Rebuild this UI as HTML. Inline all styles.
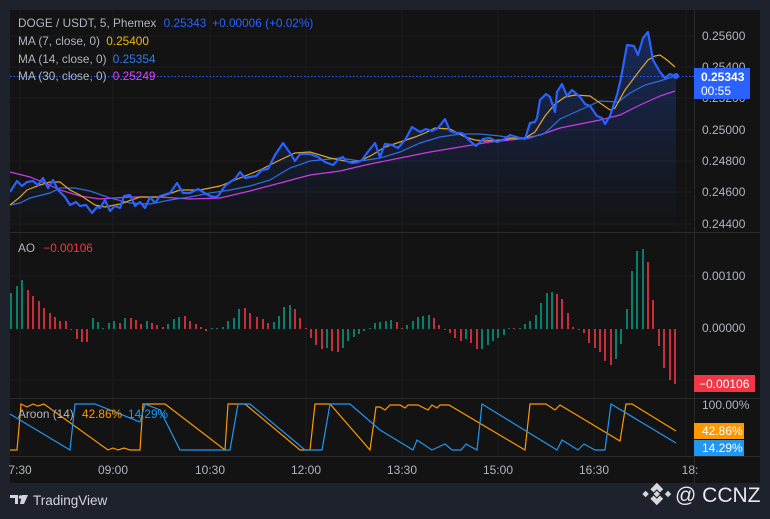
<!DOCTYPE html>
<html><head><meta charset="utf-8"><style>
html,body{margin:0;padding:0;background:#1e222d;width:770px;height:519px;overflow:hidden;font-family:"Liberation Sans",sans-serif}
svg{position:absolute;left:0;top:0}
</style></head><body>
<svg width="770" height="519" viewBox="0 0 770 519" xmlns="http://www.w3.org/2000/svg" font-family="Liberation Sans, sans-serif">
<defs>
<linearGradient id="fg" x1="0" y1="30" x2="0" y2="232" gradientUnits="userSpaceOnUse"><stop offset="0" stop-color="#2962ff" stop-opacity="0.3"/><stop offset="0.85" stop-color="#2962ff" stop-opacity="0.04"/><stop offset="1" stop-color="#2962ff" stop-opacity="0"/></linearGradient>
<clipPath id="cp"><rect x="10" y="10" width="684" height="222"/></clipPath>
</defs>
<rect x="10" y="10" width="750" height="473" fill="#131313"/>
<g stroke="#1d1d1d" stroke-width="1">
<line x1="20" y1="10" x2="20" y2="456"/><line x1="113" y1="10" x2="113" y2="456"/><line x1="210" y1="10" x2="210" y2="456"/><line x1="306" y1="10" x2="306" y2="456"/><line x1="402" y1="10" x2="402" y2="456"/><line x1="498" y1="10" x2="498" y2="456"/><line x1="594" y1="10" x2="594" y2="456"/><line x1="686" y1="10" x2="686" y2="456"/>
<line x1="10" y1="36" x2="694" y2="36"/><line x1="10" y1="67" x2="694" y2="67"/><line x1="10" y1="98" x2="694" y2="98"/><line x1="10" y1="130" x2="694" y2="130"/><line x1="10" y1="161" x2="694" y2="161"/><line x1="10" y1="192" x2="694" y2="192"/><line x1="10" y1="224" x2="694" y2="224"/>
<line x1="10" y1="276" x2="694" y2="276"/><line x1="10" y1="380" x2="694" y2="380"/>
</g>
<g stroke="#2a2a2a" stroke-width="1">
<line x1="10" y1="232.5" x2="760" y2="232.5"/><line x1="10" y1="398.5" x2="760" y2="398.5"/><line x1="10" y1="456.5" x2="760" y2="456.5"/><line x1="694.5" y1="10" x2="694.5" y2="483"/>
</g>
<g clip-path="url(#cp)">
<path fill="url(#fg)" d="M10,192 L17,181 22,186 27,182 33,181 38,185 43,178 48,188 53,180 58,190 65,197 70,205 76,202 80,206 86,205 92,213 97,207 100,208 105,200 110,211 115,206 120,208 124,196 130,195 135,206 140,202 145,208 150,197 155,203 160,196 170,193 177,183 183,193 190,193 198,189 203,192 210,196 215,197 218,196 225,186 230,182 235,179 240,172 245,178 250,177 256,176 262,170 268,169 275,155 283,143 290,153 295,161 300,154 310,154 318,157 325,162 333,165 340,158 343,157 346,161 352,163 358,162 362,160 367,153 375,143 380,157 385,144 392,145 398,148 405,140 412,127 420,132 426,129 432,131 438,128 445,119 450,131 457,133 462,133 470,141 476,146 483,139 490,138 497,142 503,140 510,135 520,138 525,139 530,123 535,122 537,118 540,100 546,94 550,97 552,103 555,112 557,92 562,84 567,96 572,90 580,97 585,104 590,106 597,116 602,118 605,124 610,116 617,95 621,78 627,45 634,46 638,55 643,38 648,32 653,60 660,72 665,78 670,74 676,77 L676,232 L10,232Z"/>
<polyline fill="none" stroke="#e040fb" stroke-width="1.2" stroke-opacity="0.9" points="10,172 30,177 45,183 60,190 80,196 100,199 130,197 160,197 190,199 220,198 250,191 280,183 310,175 340,171 370,164 400,158 430,152 460,147 490,142 520,139 540,135 560,128 600,120 620,115 640,105 660,96 675,91"/>
<polyline fill="none" stroke="#2f6fe0" stroke-width="1.2" points="10,205 20,203 30,198 50,193 60,188 75,188 90,191 110,198 130,203 150,204 170,200 190,197 210,193 230,190 250,186 270,180 290,168 310,161 340,158 360,161 380,158 400,152 420,143 440,137 460,134 480,134 500,136 520,139 530,138 545,133 560,119 580,110 600,101 618,102 630,93 645,85 660,81 675,76"/>
<polyline fill="none" stroke="#e0a526" stroke-width="1.2" points="10,205 20,197 27,190 40,185 50,182 60,182 70,190 80,195 95,205 105,207 120,204 140,197 160,197 180,190 200,190 220,186 240,178 260,170 280,160 295,153 310,152 330,158 350,162 360,161 372,155 385,147 400,142 415,137 425,133 435,128 450,129 465,137 475,140 485,141 500,140 515,138 525,138 535,132 545,116 555,104 565,97 575,95 590,96 600,103 610,110 615,108 625,90 640,70 648,60 655,56 660,55 667,60 675,67"/>
<polyline fill="none" stroke="#2962ff" stroke-width="2.2" stroke-linejoin="round" points="10,192 17,181 22,186 27,182 33,181 38,185 43,178 48,188 53,180 58,190 65,197 70,205 76,202 80,206 86,205 92,213 97,207 100,208 105,200 110,211 115,206 120,208 124,196 130,195 135,206 140,202 145,208 150,197 155,203 160,196 170,193 177,183 183,193 190,193 198,189 203,192 210,196 215,197 218,196 225,186 230,182 235,179 240,172 245,178 250,177 256,176 262,170 268,169 275,155 283,143 290,153 295,161 300,154 310,154 318,157 325,162 333,165 340,158 343,157 346,161 352,163 358,162 362,160 367,153 375,143 380,157 385,144 392,145 398,148 405,140 412,127 420,132 426,129 432,131 438,128 445,119 450,131 457,133 462,133 470,141 476,146 483,139 490,138 497,142 503,140 510,135 520,138 525,139 530,123 535,122 537,118 540,100 546,94 550,97 552,103 555,112 557,92 562,84 567,96 572,90 580,97 585,104 590,106 597,116 602,118 605,124 610,116 617,95 621,78 627,45 634,46 638,55 643,38 648,32 653,60 660,72 665,78 670,74 676,77"/>
</g>
<line x1="10" y1="76.5" x2="694" y2="76.5" stroke="#2962ff" stroke-width="1" stroke-dasharray="1.5,2"/>
<circle cx="676" cy="76" r="3" fill="#2962ff"/>
<path stroke="#089981" stroke-width="1.6" fill="none" d="M11,329V293M17,329V286M22,329V280M93,329V318M98,329V322M103,329V328M109,329V323M114,329V321M125,329V318M147,329V321M168,329V324M174,329V319M179,329V317M212,329V328M217,329V328M223,329V327M228,329V321M234,329V318M239,329V309M274,329V322M279,329V316M284,329V307M290,329V305M327,329V348M343,329V348M348,329V341M354,329V337M359,329V334M364,329V331M370,329V328M375,329V323M380,329V322M386,329V321M391,329V320M407,329V325M413,329V321M418,329V317M423,329V316M429,329V315M466,329V339M482,329V349M488,329V345M493,329V341M498,329V338M504,329V335M509,329V328M520,329V328M525,329V324M530,329V321M536,329V315M541,329V303M547,329V293M552,329V292M616,329V359M621,329V344M627,329V309M632,329V271M637,329V251M643,329V249"/>
<path stroke="#f23645" stroke-width="1.6" fill="none" d="M28,329V290M33,329V296M39,329V301M44,329V308M50,329V313M55,329V317M60,329V321M66,329V321M71,329V330M77,329V339M82,329V342M87,329V342M120,329V323M131,329V318M136,329V320M141,329V324M152,329V323M157,329V325M163,329V327M185,329V316M190,329V321M196,329V324M201,329V327M206,329V331M245,329V308M250,329V313M257,329V317M263,329V319M268,329V323M295,329V309M300,329V318M306,329V328M311,329V338M316,329V345M322,329V349M332,329V351M338,329V352M397,329V322M402,329V328M434,329V318M439,329V325M445,329V330M450,329V333M455,329V338M461,329V341M471,329V343M477,329V349M514,329V328M557,329V294M562,329V299M568,329V313M573,329V327M579,329V330M584,329V333M589,329V343M595,329V348M600,329V352M605,329V361M611,329V365M648,329V262M653,329V300M659,329V346M664,329V368M670,329V380M675,329V384"/>
<polyline fill="none" stroke="#ff9800" stroke-width="1.2" points="10,450 17,450 21,404 27,407 33,404 38,406 44,404 108,450 113,448 118,450 124,448 130,450 140,450 143,404 165,404 225,450 228,404 245,404 300,450 310,450 315,404 330,404 370,450 376,407 380,407 385,410 390,405 400,405 405,408 408,405 418,405 428,410 432,405 437,408 440,405 449,405 525,450 530,404 546,404 555,410 560,405 620,441 626,404 632,404 676,431"/>
<polyline fill="none" stroke="#2196f3" stroke-width="1.2" points="10,414 70,450 75,404 90,404 95,404 140,422 145,404 160,410 180,450 230,450 238,404 250,404 305,450 322,450 330,404 350,404 380,430 413,450 417,440 432,450 445,444 452,450 461,450 466,444 477,450 482,404 557,450 562,440 578,450 584,444 595,450 605,450 611,404 676,443"/>
<g font-size="11.8">
<text x="18" y="27" fill="#b2b5be">DOGE / USDT, 5, Phemex <tspan fill="#2962ff" dx="4">0.25343</tspan><tspan fill="#2962ff" dx="6">+0.00006 (+0.02%)</tspan></text>
<text x="18" y="45" fill="#b2b5be">MA (7, close, 0) <tspan fill="#f0b90b" dx="3">0.25400</tspan></text>
<text x="18" y="63" fill="#b2b5be">MA (14, close, 0) <tspan fill="#2f7bf0" dx="3">0.25354</tspan></text>
<text x="18" y="80" fill="#b2b5be">MA (30, close, 0) <tspan fill="#e040fb" dx="3">0.25249</tspan></text>
<text x="18" y="252" fill="#b2b5be">AO <tspan fill="#f23645" dx="5">−0.00106</tspan></text>
<text x="18" y="418" fill="#b2b5be">Aroon (14) <tspan fill="#ff9800" dx="5">42.86%</tspan><tspan fill="#2196f3" dx="6">14.29%</tspan></text>
</g>
<g font-size="12" fill="#b2b5be">
<text x="702" y="40">0.25600</text><text x="702" y="71">0.25400</text><text x="702" y="102">0.25200</text><text x="702" y="134">0.25000</text><text x="702" y="165">0.24800</text><text x="702" y="196">0.24600</text><text x="702" y="228">0.24400</text>
<text x="702" y="332">0.00000</text><text x="702" y="280">0.00100</text>
<text x="702" y="409">100.00%</text>
</g>
<rect x="694" y="68" width="56" height="31" fill="#2962ff"/>
<text x="701" y="81" font-size="12" font-weight="bold" fill="#fff">0.25343</text>
<text x="701" y="95" font-size="12" fill="#fff">00:55</text>
<rect x="694" y="375" width="61" height="17" fill="#f23645"/>
<text x="699" y="388" font-size="12" fill="#fff">−0.00106</text>
<rect x="694" y="423" width="50" height="16" fill="#ff9800"/>
<text x="702" y="435" font-size="12" fill="#fff">42.86%</text>
<rect x="694" y="440" width="50" height="16" fill="#2196f3"/>
<text x="702" y="452" font-size="12" fill="#fff">14.29%</text>
<g font-size="12" fill="#b2b5be" text-anchor="middle">
<text x="20" y="474">7:30</text><text x="113" y="474">09:00</text><text x="210" y="474">10:30</text><text x="306" y="474">12:00</text><text x="402" y="474">13:30</text><text x="498" y="474">15:00</text><text x="594" y="474">16:30</text><text x="690" y="474">18:</text>
</g>
<g fill="#d1d4dc">
<path d="M10,495h8v9h-3v-6h-5z"/><circle cx="20.5" cy="497" r="1.8"/><path d="M22,495h6l-4,9h-4z"/>
</g>
<text x="33" y="505" font-size="13.5" fill="#d1d4dc">TradingView</text>
<g fill="#d8d8d8" transform="translate(644,494) scale(1.6)">
<path d="M8,-7 L12,-3 10,-1 8,-3 6,-1 4,-3Z"/><path d="M8,7 L12,3 10,1 8,3 6,1 4,3Z"/><path d="M-1,0 L1,-2 3,0 1,2Z"/><path d="M13,0 L15,-2 17,0 15,2Z"/><path d="M8,-2 L10,0 8,2 6,0Z"/>
</g>
<text x="675" y="502" font-size="21" fill="#e8e8e8">@ CCNZ</text>
</svg>
</body></html>
